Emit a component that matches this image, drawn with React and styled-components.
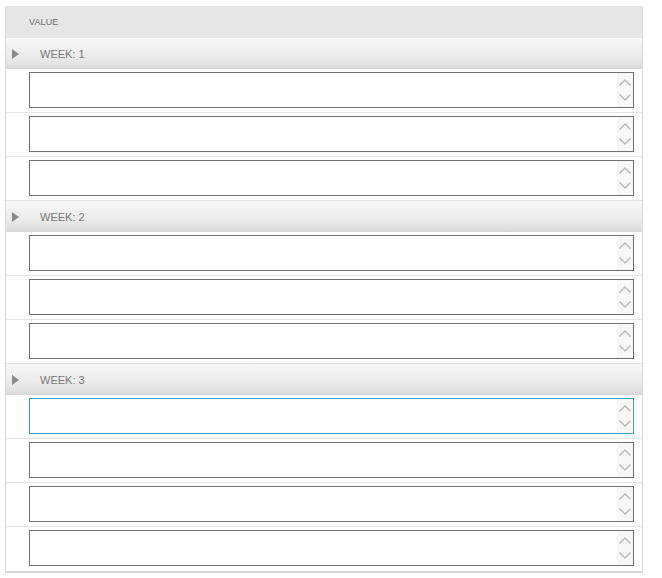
import React from "react";
import styled, { createGlobalStyle } from "styled-components";

const GlobalStyle = createGlobalStyle`
  html, body {
    margin: 0;
    padding: 0;
    background: #ffffff;
  }
  body {
    font-family: "Liberation Sans", Arial, sans-serif;
  }
`;

const Page = styled.div`
  padding: 6px 0 0 5px;
`;

const Grid = styled.div`
  width: 638px;
  box-sizing: border-box;
  border: 1px solid #d9d9d9;
  border-top: none;
  border-bottom: 2px solid #d6d6d6;
  background: #ffffff;
`;

const HeaderRow = styled.div`
  display: flex;
  align-items: center;
  height: 32px;
  background: #e6e6e6;
`;

const HeaderCell = styled.div`
  padding-left: 23px;
  font-size: 9px;
  color: #6b6b6b;
  text-transform: uppercase;
  letter-spacing: 0.1px;
`;

const GroupRow = styled.div`
  display: flex;
  align-items: center;
  height: 31px;
  background: linear-gradient(to bottom, #f7f7f7 0%, #ececec 55%, #e2e2e2 85%, #d6d6d6 100%);
`;

const Expander = styled.div`
  width: 20px;
  display: flex;
  justify-content: center;
  align-items: center;
`;

const Arrow = styled.span`
  width: 0;
  height: 0;
  margin-left: -1px;
  border-top: 5px solid transparent;
  border-bottom: 5px solid transparent;
  border-left: 7px solid #8a8a8a;
`;

const GroupTitle = styled.div`
  padding-left: 14px;
  font-size: 11px;
  color: #787878;
`;

const Row = styled.div`
  display: flex;
  height: 44px;
  box-sizing: border-box;
  border-bottom: ${(p) => (p.$last ? "none" : "1px solid #e3e3e3")};
`;

const Indent = styled.div`
  width: 20px;
  flex: none;
`;

const Cell = styled.div`
  flex: 1;
  padding: 3px 8px 0 3px;
`;

const NumericBox = styled.div`
  display: flex;
  height: 36px;
  box-sizing: border-box;
  border: 1px solid ${(p) => (p.$focused ? "#3d9bbf" : "#707070")};
  background: #ffffff;
`;

const Field = styled.input`
  flex: 1;
  min-width: 0;
  border: none;
  outline: none;
  background: transparent;
  padding: 0 6px;
  font-family: "Liberation Sans", Arial, sans-serif;
  font-size: 12px;
  color: #333;
`;

const Spinner = styled.div`
  width: 16px;
  display: flex;
  flex-direction: column;
  justify-content: center;
  align-items: center;
  gap: 1px;
  background: #f7f7f7;
`;

const SpinButton = styled.span`
  display: flex;
  height: 14px;
  align-items: center;
  justify-content: center;
`;

function Chevron({ down }) {
  return (
    <svg width="12" height="9" viewBox="0 0 12 9">
      <polyline
        points={down ? "1,2 6,7 11,2" : "1,7 6,2 11,7"}
        fill="none"
        stroke="#bfbfbf"
        strokeWidth="1.7"
        strokeLinecap="round"
        strokeLinejoin="round"
      />
    </svg>
  );
}

function NumberInput({ focused }) {
  return (
    <NumericBox $focused={focused}>
      <Field type="text" defaultValue="" />
      <Spinner>
        <SpinButton>
          <Chevron />
        </SpinButton>
        <SpinButton>
          <Chevron down />
        </SpinButton>
      </Spinner>
    </NumericBox>
  );
}

const groups = [
  { week: 1, rows: 3 },
  { week: 2, rows: 3 },
  { week: 3, rows: 4, focusFirst: true },
];

export default function App() {
  return (
    <>
      <GlobalStyle />
      <Page>
        <Grid>
          <HeaderRow>
            <HeaderCell>Value</HeaderCell>
          </HeaderRow>
          {groups.map((g, gi) => (
            <div key={g.week}>
              <GroupRow>
                <Expander>
                  <Arrow />
                </Expander>
                <GroupTitle>WEEK: {g.week}</GroupTitle>
              </GroupRow>
              {Array.from({ length: g.rows }).map((_, i) => (
                <Row key={i} $last={gi === groups.length - 1 && i === g.rows - 1}>
                  <Indent />
                  <Cell>
                    <NumberInput focused={g.focusFirst && i === 0} />
                  </Cell>
                </Row>
              ))}
            </div>
          ))}
        </Grid>
      </Page>
    </>
  );
}
